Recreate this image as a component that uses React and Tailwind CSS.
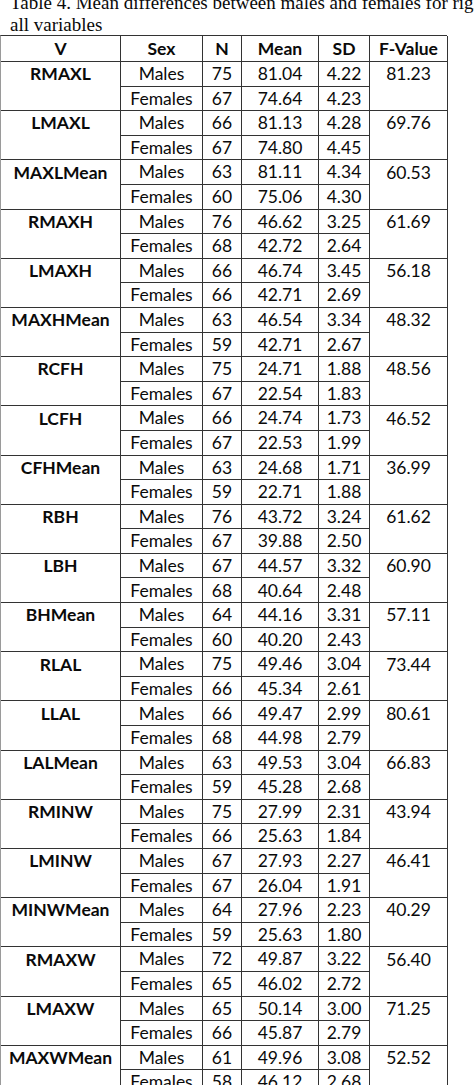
const rows = [
  ["RMAXL", [75, "81.04", "4.22"], [67, "74.64", "4.23"], "81.23"],
  ["LMAXL", [66, "81.13", "4.28"], [67, "74.80", "4.45"], "69.76"],
  ["MAXLMean", [63, "81.11", "4.34"], [60, "75.06", "4.30"], "60.53"],
  ["RMAXH", [76, "46.62", "3.25"], [68, "42.72", "2.64"], "61.69"],
  ["LMAXH", [66, "46.74", "3.45"], [66, "42.71", "2.69"], "56.18"],
  ["MAXHMean", [63, "46.54", "3.34"], [59, "42.71", "2.67"], "48.32"],
  ["RCFH", [75, "24.71", "1.88"], [67, "22.54", "1.83"], "48.56"],
  ["LCFH", [66, "24.74", "1.73"], [67, "22.53", "1.99"], "46.52"],
  ["CFHMean", [63, "24.68", "1.71"], [59, "22.71", "1.88"], "36.99"],
  ["RBH", [76, "43.72", "3.24"], [67, "39.88", "2.50"], "61.62"],
  ["LBH", [67, "44.57", "3.32"], [68, "40.64", "2.48"], "60.90"],
  ["BHMean", [64, "44.16", "3.31"], [60, "40.20", "2.43"], "57.11"],
  ["RLAL", [75, "49.46", "3.04"], [66, "45.34", "2.61"], "73.44"],
  ["LLAL", [66, "49.47", "2.99"], [68, "44.98", "2.79"], "80.61"],
  ["LALMean", [63, "49.53", "3.04"], [59, "45.28", "2.68"], "66.83"],
  ["RMINW", [75, "27.99", "2.31"], [66, "25.63", "1.84"], "43.94"],
  ["LMINW", [67, "27.93", "2.27"], [67, "26.04", "1.91"], "46.41"],
  ["MINWMean", [64, "27.96", "2.23"], [59, "25.63", "1.80"], "40.29"],
  ["RMAXW", [72, "49.87", "3.22"], [65, "46.02", "2.72"], "56.40"],
  ["LMAXW", [65, "50.14", "3.00"], [66, "45.87", "2.79"], "71.25"],
  ["MAXWMean", [61, "49.96", "3.08"], [58, "46.12", "2.68"], "52.52"],
];

const cell = "border-r border-b border-[#333] flex items-center justify-center";
const spanCell = "row-span-2 border-r border-b border-[#333] flex justify-center items-start";

export default function App() {
  return (
    <div className="w-[474px] h-[1085px] overflow-hidden bg-white text-[#0a0a0a]">
      <div
        className="mt-[-7.8px] pl-[10px] text-[19px] leading-[21.4px] whitespace-nowrap"
        style={{ fontFamily: '"Liberation Serif", "Times New Roman", serif' }}
      >
        <div>Table 4. Mean differences between males and females for right and left sides in</div>
        <div>all variables</div>
      </div>
      <div
        className="grid grid-cols-[120px_82px_39px_77px_51px_78px] grid-rows-[26px] auto-rows-[24.6px] w-[447px] border-t border-l border-t-[#333] border-l-[#9a9a9a] text-[17.5px] leading-none"
        style={{ fontFamily: 'Lato, "Open Sans", sans-serif' }}
      >
        {["V", "Sex", "N", "Mean", "SD", "F-Value"].map((h) => (
          <div key={h} className={cell + " font-bold"}>{h}</div>
        ))}
        {rows.map(([v, m, f, fv]) => [
          <div key={v + "v"} className={spanCell + " font-bold"}>
            <div className="h-[24px] flex items-center">{v}</div>
          </div>,
          <div key={v + "s1"} className={cell}>Males</div>,
          <div key={v + "n1"} className={cell}>{m[0]}</div>,
          <div key={v + "m1"} className={cell}>{m[1]}</div>,
          <div key={v + "d1"} className={cell}>{m[2]}</div>,
          <div key={v + "f"} className={spanCell}>
            <div className="h-[24px] flex items-center">{fv}</div>
          </div>,
          <div key={v + "s2"} className={cell}>Females</div>,
          <div key={v + "n2"} className={cell}>{f[0]}</div>,
          <div key={v + "m2"} className={cell}>{f[1]}</div>,
          <div key={v + "d2"} className={cell}>{f[2]}</div>,
        ])}
      </div>
    </div>
  );
}
